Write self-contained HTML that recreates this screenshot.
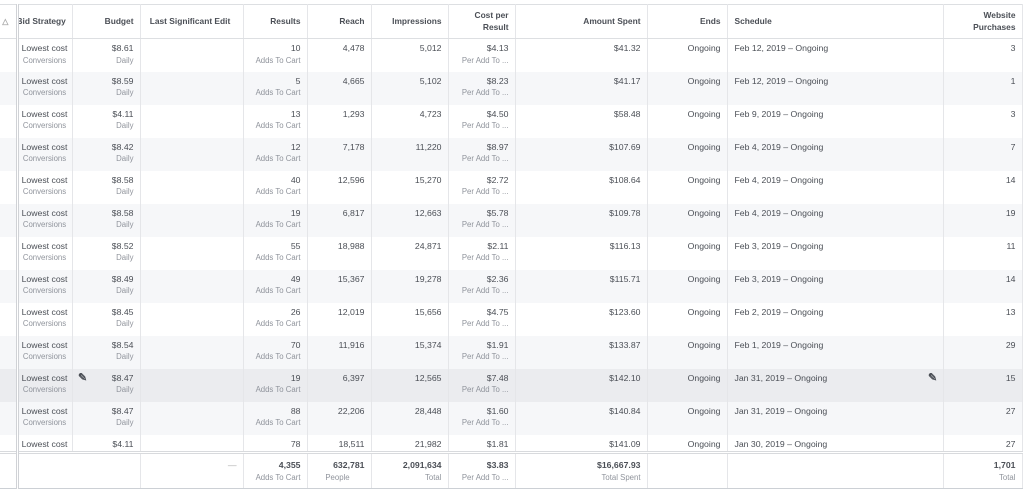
<!DOCTYPE html>
<html><head><meta charset="utf-8"><style>
*{margin:0;padding:0;box-sizing:border-box}
body{width:1024px;height:494px;overflow:hidden;background:#fff;font-family:"Liberation Sans",Arial,sans-serif;color:#4b4f56;position:relative}
table{position:absolute;left:0;top:4px;border-collapse:collapse;table-layout:fixed;width:1022px}
td,th{border-right:1px solid #e5e6e9;vertical-align:top;text-align:right;padding:4px 6px 0 3px;font-size:8.7px;line-height:11.5px;white-space:nowrap;overflow:hidden;font-weight:normal}
th{height:34px;vertical-align:middle;padding-top:0;font-weight:bold;font-size:8.4px;border-bottom:1px solid #dddfe2;border-top:1px solid #dddfe2}
td{height:33px}
.s{color:#90949c;font-size:7.8px;display:block}
tr.g td{background:#f6f7f9}
tr.h td{background:#ebecef}
td.c0,th.c0{border-right:3px double #d0d2d6;padding:0}
td.l,th.l{text-align:left;padding-left:7px}
td.b1{text-align:center;padding:4px 2px 0 1px}
tr.p td{height:18px}
tr.t td{height:36px;border-top:3px double #d8dadd;border-bottom:1px solid #ccd0d5;padding-top:6px}
tr.t td b{font-weight:bold}
.pen{position:absolute;font-size:11px;color:#4b4f56;font-weight:bold}
</style></head><body>
<table>
<colgroup><col style="width:17px"><col style="width:55px"><col style="width:68px"><col style="width:103px"><col style="width:64px"><col style="width:64px"><col style="width:77px"><col style="width:67px"><col style="width:132px"><col style="width:80px"><col style="width:216px"><col style="width:79px"></colgroup>
<tr><th class="c0" style="text-align:left;color:#aaa;font-size:8px">&nbsp;△</th><th class="l" style="padding-left:0;text-indent:-2px">Bid Strategy</th><th>Budget</th><th style="text-align:center">Last Significant Edit</th><th>Results</th><th>Reach</th><th>Impressions</th><th style="text-align:right">Cost per<br>Result</th><th>Amount Spent</th><th>Ends</th><th class="l">Schedule</th><th>Website<br>Purchases</th></tr>
<tr><td class="c0"></td><td class="b1">Lowest cost<span class="s">Conversions</span></td><td>$8.61<span class="s">Daily</span></td><td></td><td>10<span class="s">Adds To Cart</span></td><td>4,478</td><td>5,012</td><td>$4.13<span class="s">Per Add To ...</span></td><td>$41.32</td><td>Ongoing</td><td class="l">Feb 12, 2019 – Ongoing</td><td>3</td></tr>
<tr class="g"><td class="c0"></td><td class="b1">Lowest cost<span class="s">Conversions</span></td><td>$8.59<span class="s">Daily</span></td><td></td><td>5<span class="s">Adds To Cart</span></td><td>4,665</td><td>5,102</td><td>$8.23<span class="s">Per Add To ...</span></td><td>$41.17</td><td>Ongoing</td><td class="l">Feb 12, 2019 – Ongoing</td><td>1</td></tr>
<tr><td class="c0"></td><td class="b1">Lowest cost<span class="s">Conversions</span></td><td>$4.11<span class="s">Daily</span></td><td></td><td>13<span class="s">Adds To Cart</span></td><td>1,293</td><td>4,723</td><td>$4.50<span class="s">Per Add To ...</span></td><td>$58.48</td><td>Ongoing</td><td class="l">Feb 9, 2019 – Ongoing</td><td>3</td></tr>
<tr class="g"><td class="c0"></td><td class="b1">Lowest cost<span class="s">Conversions</span></td><td>$8.42<span class="s">Daily</span></td><td></td><td>12<span class="s">Adds To Cart</span></td><td>7,178</td><td>11,220</td><td>$8.97<span class="s">Per Add To ...</span></td><td>$107.69</td><td>Ongoing</td><td class="l">Feb 4, 2019 – Ongoing</td><td>7</td></tr>
<tr><td class="c0"></td><td class="b1">Lowest cost<span class="s">Conversions</span></td><td>$8.58<span class="s">Daily</span></td><td></td><td>40<span class="s">Adds To Cart</span></td><td>12,596</td><td>15,270</td><td>$2.72<span class="s">Per Add To ...</span></td><td>$108.64</td><td>Ongoing</td><td class="l">Feb 4, 2019 – Ongoing</td><td>14</td></tr>
<tr class="g"><td class="c0"></td><td class="b1">Lowest cost<span class="s">Conversions</span></td><td>$8.58<span class="s">Daily</span></td><td></td><td>19<span class="s">Adds To Cart</span></td><td>6,817</td><td>12,663</td><td>$5.78<span class="s">Per Add To ...</span></td><td>$109.78</td><td>Ongoing</td><td class="l">Feb 4, 2019 – Ongoing</td><td>19</td></tr>
<tr><td class="c0"></td><td class="b1">Lowest cost<span class="s">Conversions</span></td><td>$8.52<span class="s">Daily</span></td><td></td><td>55<span class="s">Adds To Cart</span></td><td>18,988</td><td>24,871</td><td>$2.11<span class="s">Per Add To ...</span></td><td>$116.13</td><td>Ongoing</td><td class="l">Feb 3, 2019 – Ongoing</td><td>11</td></tr>
<tr class="g"><td class="c0"></td><td class="b1">Lowest cost<span class="s">Conversions</span></td><td>$8.49<span class="s">Daily</span></td><td></td><td>49<span class="s">Adds To Cart</span></td><td>15,367</td><td>19,278</td><td>$2.36<span class="s">Per Add To ...</span></td><td>$115.71</td><td>Ongoing</td><td class="l">Feb 3, 2019 – Ongoing</td><td>14</td></tr>
<tr><td class="c0"></td><td class="b1">Lowest cost<span class="s">Conversions</span></td><td>$8.45<span class="s">Daily</span></td><td></td><td>26<span class="s">Adds To Cart</span></td><td>12,019</td><td>15,656</td><td>$4.75<span class="s">Per Add To ...</span></td><td>$123.60</td><td>Ongoing</td><td class="l">Feb 2, 2019 – Ongoing</td><td>13</td></tr>
<tr class="g"><td class="c0"></td><td class="b1">Lowest cost<span class="s">Conversions</span></td><td>$8.54<span class="s">Daily</span></td><td></td><td>70<span class="s">Adds To Cart</span></td><td>11,916</td><td>15,374</td><td>$1.91<span class="s">Per Add To ...</span></td><td>$133.87</td><td>Ongoing</td><td class="l">Feb 1, 2019 – Ongoing</td><td>29</td></tr>
<tr class="h"><td class="c0"></td><td class="b1">Lowest cost<span class="s">Conversions</span></td><td>$8.47<span class="s">Daily</span></td><td></td><td>19<span class="s">Adds To Cart</span></td><td>6,397</td><td>12,565</td><td>$7.48<span class="s">Per Add To ...</span></td><td>$142.10</td><td>Ongoing</td><td class="l">Jan 31, 2019 – Ongoing</td><td>15</td></tr>
<tr class="g"><td class="c0"></td><td class="b1">Lowest cost<span class="s">Conversions</span></td><td>$8.47<span class="s">Daily</span></td><td></td><td>88<span class="s">Adds To Cart</span></td><td>22,206</td><td>28,448</td><td>$1.60<span class="s">Per Add To ...</span></td><td>$140.84</td><td>Ongoing</td><td class="l">Jan 31, 2019 – Ongoing</td><td>27</td></tr>
<tr class="p"><td class="c0"></td><td class="b1">Lowest cost</td><td>$4.11</td><td></td><td>78</td><td>18,511</td><td>21,982</td><td>$1.81</td><td>$141.09</td><td>Ongoing</td><td class="l">Jan 30, 2019 – Ongoing</td><td>27</td></tr>
<tr class="t"><td class="c0"></td><td colspan="2" style="border-right:1px solid #e5e6e9"></td><td style="color:#aaa">—</td><td><b>4,355</b><span class="s">Adds To Cart</span></td><td><b>632,781</b><span class="s" style="text-align:center">People</span></td><td><b>2,091,634</b><span class="s">Total</span></td><td><b>$3.83</b><span class="s">Per Add To ...</span></td><td><b>$16,667.93</b><span class="s">Total Spent</span></td><td></td><td></td><td><b>1,701</b><span class="s">Total</span></td></tr>
</table>
<span class="pen" style="left:78px;top:371px">✎</span>
<span class="pen" style="left:928px;top:371px">✎</span>
</body></html>
